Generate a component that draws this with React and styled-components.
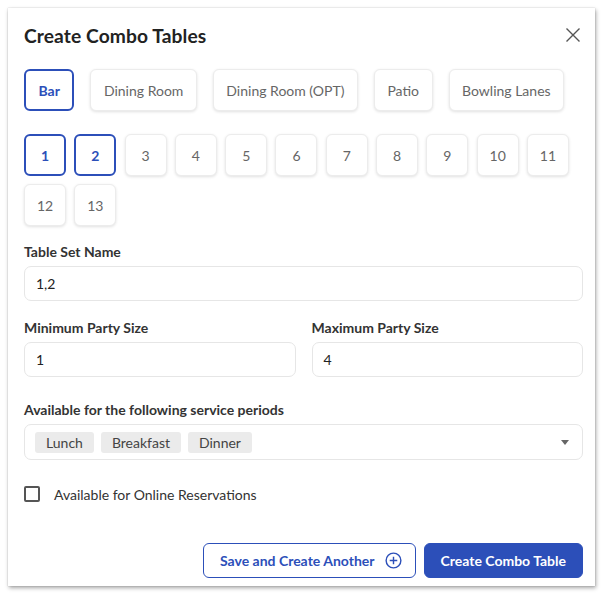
import React from "react";
import styled, { createGlobalStyle } from "styled-components";

const Global = createGlobalStyle`
  html, body { margin: 0; padding: 0; background: #fff; }
  body { padding: 8px; font-family: Lato, "Open Sans", sans-serif; }
  * { box-sizing: border-box; }
`;

const BLUE = "#2c4fb9";

const Dialog = styled.div`
  width: 587px;
  height: 578px;
  background: #fff;
  box-shadow: 1px 2px 4px rgba(0, 0, 0, 0.35), 0 0 1px rgba(0, 0, 0, 0.25);
  padding: 15px 12px 8px 16px;
  display: flex;
  flex-direction: column;
`;

const Header = styled.div`
  display: flex;
  align-items: center;
  justify-content: space-between;
  height: 24px;
`;

const Title = styled.h1`
  margin: 0;
  font-size: 19.2px;
  font-weight: 700;
  color: #222;
  letter-spacing: 0.1px;
`;

const Close = styled.button`
  border: 0;
  background: none;
  padding: 0;
  width: 16px;
  height: 16px;
  margin-right: 2px;
  display: flex;
  cursor: pointer;
`;

const Body = styled.div`
  display: flex;
  flex-direction: column;
  flex: 1;
`;

const LocationRow = styled.div`
  display: flex;
  gap: 16px;
  margin-top: 22px;
`;

const Choice = styled.button`
  height: 42px;
  padding: 0 ${(p) => (p.$square ? 0 : 12.5)}px;
  width: ${(p) => (p.$square ? "42px" : "auto")};
  border-radius: 6px;
  background: #fff;
  font-family: inherit;
  font-size: 14px;
  color: ${(p) => (p.$active ? BLUE : "#666")};
  font-weight: ${(p) => (p.$active ? 700 : 400)};
  border: ${(p) => (p.$active ? `2px solid ${BLUE}` : "1px solid #ececec")};
  box-shadow: ${(p) => (p.$active ? "none" : "0 1px 3px rgba(0,0,0,0.12)")};
  cursor: pointer;
`;

const TableGrid = styled.div`
  display: flex;
  flex-wrap: wrap;
  gap: 8px 8.3px;
  margin-top: 23px;
  width: 550px;
`;

const Field = styled.div`
  display: flex;
  flex-direction: column;
  margin-top: ${(p) => p.$mt || 17}px;
`;

const Label = styled.label`
  font-size: 14px;
  font-weight: 700;
  color: #333;
  line-height: 18px;
  margin-bottom: 5px;
`;

const Input = styled.div`
  height: 35px;
  border: 1px solid #e6e6e6;
  border-radius: 7px;
  display: flex;
  align-items: center;
  padding: 0 11px;
  font-size: 14px;
  color: #222;
`;

const TwoCol = styled.div`
  display: flex;
  gap: 16px;
  & > * { flex: 1; }
`;

const Select = styled.div`
  height: 36px;
  border: 1px solid #e6e6e6;
  border-radius: 7px;
  display: flex;
  align-items: center;
  padding: 0 13px 0 10px;
  gap: 7px;
`;

const Chip = styled.span`
  background: #ebebeb;
  border-radius: 3px;
  height: 21px;
  padding: 0 11px;
  display: flex;
  align-items: center;
  font-size: 14px;
  color: #444;
`;

const Caret = styled.span`
  margin-left: auto;
  width: 0;
  height: 0;
  border-left: 4.5px solid transparent;
  border-right: 4.5px solid transparent;
  border-top: 5px solid #666;
`;

const CheckRow = styled.label`
  display: flex;
  align-items: center;
  gap: 14px;
  margin-top: 24px;
  height: 20px;
  font-size: 14px;
  color: #333;
`;

const Box = styled.span`
  width: 16px;
  height: 16px;
  border: 2px solid #555;
  border-radius: 2px;
`;

const Footer = styled.div`
  margin-top: auto;
  display: flex;
  justify-content: flex-end;
  gap: 8px;
`;

const Btn = styled.button`
  height: 35px;
  border-radius: 6px;
  font-family: inherit;
  font-size: 14px;
  font-weight: 700;
  padding: 0 ${(p) => (p.$primary ? 16 : 13)}px 0 16px;
  display: flex;
  align-items: center;
  gap: 10px;
  cursor: pointer;
  border: 1.5px solid ${BLUE};
  background: ${(p) => (p.$primary ? BLUE : "#fff")};
  color: ${(p) => (p.$primary ? "#fff" : BLUE)};
`;

const locations = ["Bar", "Dining Room", "Dining Room (OPT)", "Patio", "Bowling Lanes"];
const tables = Array.from({ length: 13 }, (_, i) => i + 1);

export default function App() {
  return (
    <>
      <Global />
      <Dialog>
        <Header>
          <Title>Create Combo Tables</Title>
          <Close aria-label="close">
            <svg width="16" height="16" viewBox="0 0 16 16">
              <path d="M1.5 1.5 L14.5 14.5 M14.5 1.5 L1.5 14.5" stroke="#555" strokeWidth="1.4" fill="none" />
            </svg>
          </Close>
        </Header>
        <Body>
          <LocationRow>
            {locations.map((l) => (
              <Choice key={l} $active={l === "Bar"}>{l}</Choice>
            ))}
          </LocationRow>
          <TableGrid>
            {tables.map((t) => (
              <Choice key={t} $square $active={t <= 2}>{t}</Choice>
            ))}
          </TableGrid>
          <Field>
            <Label>Table Set Name</Label>
            <Input>1,2</Input>
          </Field>
          <TwoCol>
            <Field $mt={18}>
              <Label>Minimum Party Size</Label>
              <Input>1</Input>
            </Field>
            <Field $mt={18}>
              <Label>Maximum Party Size</Label>
              <Input>4</Input>
            </Field>
          </TwoCol>
          <Field $mt={24}>
            <Label>Available for the following service periods</Label>
            <Select>
              <Chip>Lunch</Chip>
              <Chip>Breakfast</Chip>
              <Chip>Dinner</Chip>
              <Caret />
            </Select>
          </Field>
          <CheckRow>
            <Box />
            Available for Online Reservations
          </CheckRow>
          <Footer>
            <Btn>
              Save and Create Another
              <svg width="17" height="17" viewBox="0 0 18 18">
                <circle cx="9" cy="9" r="7.8" stroke={BLUE} strokeWidth="1.5" fill="none" />
                <path d="M9 5v8M5 9h8" stroke={BLUE} strokeWidth="1.5" />
              </svg>
            </Btn>
            <Btn $primary>Create Combo Table</Btn>
          </Footer>
        </Body>
      </Dialog>
    </>
  );
}
